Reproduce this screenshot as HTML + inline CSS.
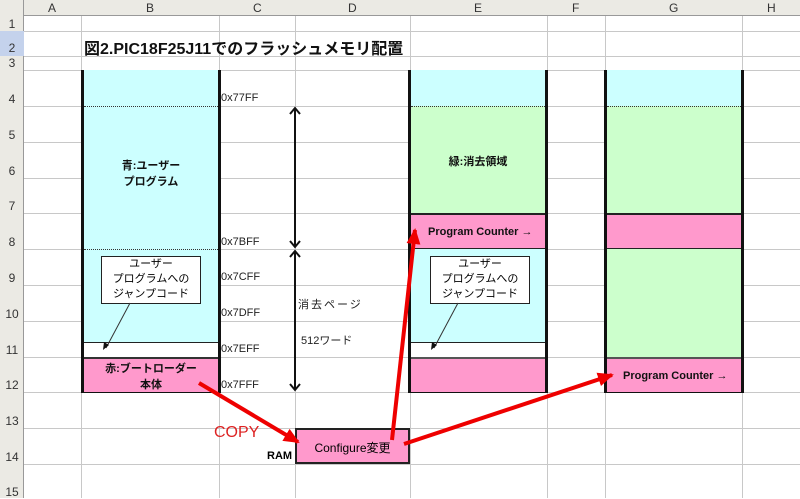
<!DOCTYPE html>
<html><head><meta charset="utf-8"><style>
body{margin:0;width:800px;height:498px;overflow:hidden;background:#fff;font-family:"Liberation Sans","Noto Sans CJK JP",sans-serif;position:relative}
.a{position:absolute}
.h{background:#ebeae4;color:#333;font-size:12px;text-align:center;box-sizing:border-box}
.vl{position:absolute;top:0;height:498px;width:1px;background:#c8c8c8}
.hl{position:absolute;left:0;width:800px;height:1px;background:#c8c8c8}
.lbl{position:absolute;font-size:11px;color:#222}
.b{font-weight:bold;font-size:11px;color:#111;text-align:center;position:absolute}
</style></head><body>
<div class="vl" style="left:81px"></div><div class="vl" style="left:219px"></div><div class="vl" style="left:295px"></div><div class="vl" style="left:410px"></div><div class="vl" style="left:547px"></div><div class="vl" style="left:605px"></div><div class="vl" style="left:742px"></div>
<div class="hl" style="top:31px"></div><div class="hl" style="top:56px"></div><div class="hl" style="top:70px"></div><div class="hl" style="top:106px"></div><div class="hl" style="top:142px"></div><div class="hl" style="top:178px"></div><div class="hl" style="top:213px"></div><div class="hl" style="top:249px"></div><div class="hl" style="top:285px"></div><div class="hl" style="top:321px"></div><div class="hl" style="top:357px"></div><div class="hl" style="top:392px"></div><div class="hl" style="top:428px"></div><div class="hl" style="top:464px"></div>
<div class="a h" style="left:0;top:0;width:800px;height:16px;border-bottom:1px solid #999"></div>
<div class="a h" style="left:0;top:0;width:24px;height:498px;border-right:1px solid #999"></div>
<div class="a h" style="left:0;top:31px;width:24px;height:25px;background:#c4d2ec"></div>
<div class="a" style="top:1px;left:0;width:800px;font-size:12px;color:#333">
<span class="a" style="left:48px">A</span><span class="a" style="left:146px">B</span><span class="a" style="left:253px">C</span><span class="a" style="left:348px">D</span><span class="a" style="left:474px">E</span><span class="a" style="left:572px">F</span><span class="a" style="left:669px">G</span><span class="a" style="left:767px">H</span></div>
<div class="a" style="left:0;width:24px;font-size:12px;color:#333;text-align:center">
<div class="a" style="top:17px;width:24px">1</div><div class="a" style="top:41px;width:24px">2</div><div class="a" style="top:56px;width:24px">3</div><div class="a" style="top:92px;width:24px">4</div><div class="a" style="top:128px;width:24px">5</div><div class="a" style="top:164px;width:24px">6</div><div class="a" style="top:199px;width:24px">7</div><div class="a" style="top:235px;width:24px">8</div><div class="a" style="top:271px;width:24px">9</div><div class="a" style="top:307px;width:24px">10</div><div class="a" style="top:343px;width:24px">11</div><div class="a" style="top:378px;width:24px">12</div><div class="a" style="top:414px;width:24px">13</div><div class="a" style="top:450px;width:24px">14</div><div class="a" style="top:485px;width:24px">15</div></div>
<div class="a" style="left:84px;top:35px;font-size:16px;font-weight:bold;color:#111">図2.PIC18F25J11でのフラッシュメモリ配置</div>
<div class="a" style="left:81px;top:70px;height:320px;border-left:3px solid #111;border-right:3px solid #111;border-bottom:3px solid #111;background:#ccffff;width:134px"></div>
<div class="a" style="left:84px;top:342px;width:134px;height:15px;background:#fff;border-top:1px solid #222"></div>
<div class="a" style="left:84px;top:357px;width:134px;height:33px;background:#ff99cc;border-top:2px solid #333"></div>
<div class="a" style="left:84px;top:106px;width:134px;border-top:1px dotted #333"></div>
<div class="a" style="left:84px;top:249px;width:134px;border-top:1px dotted #333"></div>
<div class="b" style="left:84px;top:158px;width:134px;line-height:16px">青:ユーザー<br>プログラム</div>
<div class="a" style="left:101px;top:256px;width:98px;height:46px;border:1px solid #222;background:#fff;font-size:11px;text-align:center;line-height:15px">ユーザー<br>プログラムへの<br>ジャンプコード</div>
<div class="b" style="left:84px;top:361px;width:134px;line-height:16px">赤:ブートローダー<br>本体</div>
<div class="a" style="left:408px;top:70px;width:134px;height:320px;border-left:3px solid #111;border-right:3px solid #111;border-bottom:3px solid #111;background:#ccffff"></div>
<div class="a" style="left:411px;top:106px;width:134px;height:107px;background:#ccffcc;border-top:1px dotted #333"></div>
<div class="a" style="left:411px;top:213px;width:134px;height:36px;background:#ff99cc;border-top:2px solid #222;border-bottom:1px solid #222;box-sizing:border-box"></div>
<div class="a" style="left:411px;top:342px;width:134px;height:15px;background:#fff;border-top:1px solid #222"></div>
<div class="a" style="left:411px;top:357px;width:134px;height:33px;background:#ff99cc;border-top:2px solid #555"></div>
<div class="b" style="left:411px;top:153px;width:134px">緑:消去領域</div>
<div class="b" style="left:428px;top:226px">Program Counter →</div>
<div class="a" style="left:430px;top:256px;width:98px;height:46px;border:1px solid #222;background:#fff;font-size:11px;text-align:center;line-height:15px">ユーザー<br>プログラムへの<br>ジャンプコード</div>
<div class="a" style="left:604px;top:70px;width:134px;height:320px;border-left:3px solid #111;border-right:3px solid #111;border-bottom:3px solid #111;background:#ccffff"></div>
<div class="a" style="left:607px;top:106px;width:134px;height:107px;background:#ccffcc;border-top:1px dotted #333"></div>
<div class="a" style="left:607px;top:213px;width:134px;height:36px;background:#ff99cc;border-top:2px solid #222;border-bottom:1px solid #222;box-sizing:border-box"></div>
<div class="a" style="left:607px;top:249px;width:134px;height:108px;background:#ccffcc"></div>
<div class="a" style="left:607px;top:357px;width:134px;height:33px;background:#ff99cc;border-top:2px solid #555"></div>
<div class="b" style="left:623px;top:370px">Program Counter →</div>
<div class="lbl" style="left:221px;top:92px">0x77FF</div>
<div class="lbl" style="left:221px;top:236px">0x7BFF</div>
<div class="lbl" style="left:221px;top:271px">0x7CFF</div>
<div class="lbl" style="left:221px;top:307px">0x7DFF</div>
<div class="lbl" style="left:221px;top:343px">0x7EFF</div>
<div class="lbl" style="left:221px;top:379px">0x7FFF</div>
<div class="lbl" style="left:298px;top:296px;letter-spacing:2px">消去ページ</div>
<div class="lbl" style="left:301px;top:332px">512ワード</div>
<div class="a" style="left:214px;top:424px;font-size:16px;color:#d22">COPY</div>
<div class="a" style="left:267px;top:450px;font-size:11px;font-weight:bold">RAM</div>
<div class="a" style="left:295px;top:428px;background:#ff99cc;border:2px solid #222;width:111px;height:32px;font-size:12px;text-align:center;line-height:36px">Configure変更</div>
<svg class="a" style="left:0;top:0" width="800" height="498">
<defs><marker id="r" markerWidth="16" markerHeight="14" refX="14" refY="7" orient="auto" markerUnits="userSpaceOnUse"><path d="M0,0L16,7L0,14z" fill="#e00"/></marker></defs>
<line x1="295" y1="108" x2="295" y2="247" stroke="#111" stroke-width="2"/>
<path d="M290,114L295,108L300,114M290,241L295,247L300,241" fill="none" stroke="#111" stroke-width="2"/>
<line x1="295" y1="251" x2="295" y2="390" stroke="#111" stroke-width="2"/>
<path d="M290,257L295,251L300,257M290,384L295,390L300,384" fill="none" stroke="#111" stroke-width="2"/>
<line x1="130" y1="303" x2="106" y2="348" stroke="#333" stroke-width="1"/><path d="M103,350L104,342L109,345z" fill="#111"/>
<line x1="458" y1="303" x2="434" y2="348" stroke="#333" stroke-width="1"/><path d="M431,350L432,342L437,345z" fill="#111"/>
<g stroke="#e00" stroke-width="4" fill="none">
<line x1="199" y1="383" x2="298" y2="442" marker-end="url(#r)"/>
<line x1="392" y1="440" x2="415" y2="230" marker-end="url(#r)"/>
<line x1="404" y1="444" x2="612" y2="375" marker-end="url(#r)"/>
</g>
</svg>
</body></html>
